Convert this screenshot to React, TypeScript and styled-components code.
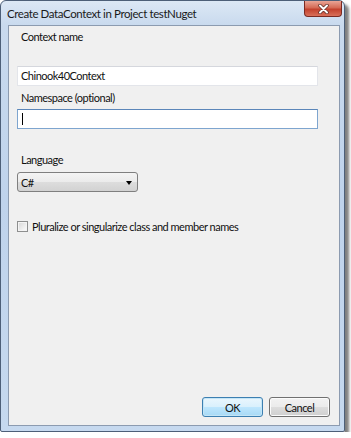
import React from "react";
import styled, { createGlobalStyle } from "styled-components";

const GlobalStyle = createGlobalStyle`
  html, body {
    margin: 0;
    padding: 0;
    background: #ffffff;
  }
  body {
    font-family: Lato, "Noto Sans", sans-serif;
    font-size: 11px;
    letter-spacing: -0.5px;
    color: #111111;
  }
`;

const Window = styled.div`
  width: 345px;
  height: 432px;
  box-sizing: border-box;
  display: flex;
  flex-direction: column;
  border: 1px solid #4d5f78;
  border-radius: 6px 6px 2px 2px;
  background: linear-gradient(180deg, #dce8f5 0px, #c9daee 24px, #bfd3ec 200px, #c6d9ef 100%);
  box-shadow: 4px 4px 3px rgba(0, 0, 0, 0.5);
`;

const TitleBar = styled.div`
  height: 24px;
  display: flex;
  align-items: flex-start;
  justify-content: space-between;
  padding-left: 6px;
  padding-right: 2px;
`;

const Title = styled.span`
  margin-top: 6px;
  font-size: 11.5px;
  letter-spacing: -0.4px;
  color: #1a1a1a;
  white-space: nowrap;
`;

const CloseButton = styled.div`
  width: 38px;
  height: 16px;
  display: flex;
  align-items: center;
  justify-content: center;
  box-sizing: border-box;
  border: 1px solid #7a2a22;
  border-top: none;
  border-radius: 0 0 4px 4px;
  background: linear-gradient(180deg, #e9a596 0%, #d46a55 45%, #c2412d 55%, #d9705a 100%);
`;

const Client = styled.div`
  flex: 1;
  margin: 0 4px 5px 7px;
  background: #f0f0f0;
  border: 1px solid #8c9bb0;
  display: flex;
  flex-direction: column;
  padding: 4px 21px 8px 8px;
`;

const Label = styled.div<{ $gap: number }>`
  margin-top: ${(p) => p.$gap}px;
  height: 14px;
  line-height: 14px;
  padding-left: 4px;
  white-space: nowrap;
`;

const TextBox = styled.div<{ $gap: number; $focused?: boolean }>`
  margin-top: ${(p) => p.$gap}px;
  height: 20px;
  box-sizing: border-box;
  background: #ffffff;
  border: 1px solid ${(p) => (p.$focused ? "#7ea5cf" : "#e3e5ea")};
  border-top-color: ${(p) => (p.$focused ? "#5b86b9" : "#d5d7dd")};
  display: flex;
  align-items: center;
  padding-left: 3px;
  line-height: 14px;
`;

const Caret = styled.span`
  width: 1px;
  height: 12px;
  background: #000;
  margin-left: 1px;
`;

const Select = styled.div<{ $gap: number }>`
  margin-top: ${(p) => p.$gap}px;
  width: 121px;
  height: 20px;
  box-sizing: border-box;
  border: 1px solid #7f7f7f;
  border-radius: 3px;
  background: linear-gradient(180deg, #f4f4f4 0%, #ebebeb 50%, #dddddd 51%, #d2d2d2 100%);
  display: flex;
  align-items: center;
  justify-content: space-between;
  padding: 0 5px 0 3px;
`;

const Arrow = styled.span`
  width: 0;
  height: 0;
  border-left: 3.5px solid transparent;
  border-right: 3.5px solid transparent;
  border-top: 4px solid #000;
  margin-top: 1px;
`;

const CheckRow = styled.label<{ $gap: number }>`
  margin-top: ${(p) => p.$gap}px;
  height: 14px;
  display: flex;
  align-items: center;
  gap: 4px;
  white-space: nowrap;
`;

const Box = styled.span`
  width: 11px;
  height: 11px;
  box-sizing: border-box;
  border: 1px solid #8e8f8f;
  background: linear-gradient(135deg, #d6d6d6 0%, #f2f2f2 70%, #fcfcfc 100%);
  box-shadow: inset 0 0 0 1px #f4f4f4;
`;

const ButtonRow = styled.div`
  margin-top: auto;
  margin-right: -12px;
  display: flex;
  justify-content: flex-end;
  gap: 6px;
`;

const Button = styled.div<{ $primary?: boolean }>`
  width: 61px;
  height: 20px;
  box-sizing: border-box;
  border-radius: 3px;
  display: flex;
  align-items: center;
  justify-content: center;
  border: 1px solid ${(p) => (p.$primary ? "#3c7fb1" : "#707070")};
  background: ${(p) =>
    p.$primary
      ? "linear-gradient(180deg, #eaf6fd 0%, #d9f0fc 50%, #bee6fd 51%, #a7d9f5 100%)"
      : "linear-gradient(180deg, #f2f2f2 0%, #ebebeb 50%, #dddddd 51%, #cfcfcf 100%)"};
  box-shadow: inset 0 0 0 1px ${(p) => (p.$primary ? "#c4e5f6" : "#fbfbfb")};
`;

export default function App() {
  return (
    <>
      <GlobalStyle />
      <Window>
        <TitleBar>
          <Title>Create DataContext in Project testNuget</Title>
          <CloseButton>
            <svg width="11" height="10" viewBox="0 0 11 10">
              <path d="M2 1.5 L9 8.5 M9 1.5 L2 8.5" stroke="#5a2a24" strokeWidth="3.4" strokeLinecap="round" />
              <path d="M2 1.5 L9 8.5 M9 1.5 L2 8.5" stroke="#ffffff" strokeWidth="2" strokeLinecap="round" />
            </svg>
          </CloseButton>
        </TitleBar>
        <Client>
          <Label $gap={0}>Context name</Label>
          <TextBox $gap={22}>Chinook40Context</TextBox>
          <Label $gap={5}>Namespace (optional)</Label>
          <TextBox $gap={4} $focused>
            <Caret />
          </TextBox>
          <Label $gap={24}>Language</Label>
          <Select $gap={5}>
            <span>C#</span>
            <Arrow />
          </Select>
          <CheckRow $gap={27}>
            <Box />
            <span>Pluralize or singularize class and member names</span>
          </CheckRow>
          <ButtonRow>
            <Button $primary>OK</Button>
            <Button>Cancel</Button>
          </ButtonRow>
        </Client>
      </Window>
    </>
  );
}
